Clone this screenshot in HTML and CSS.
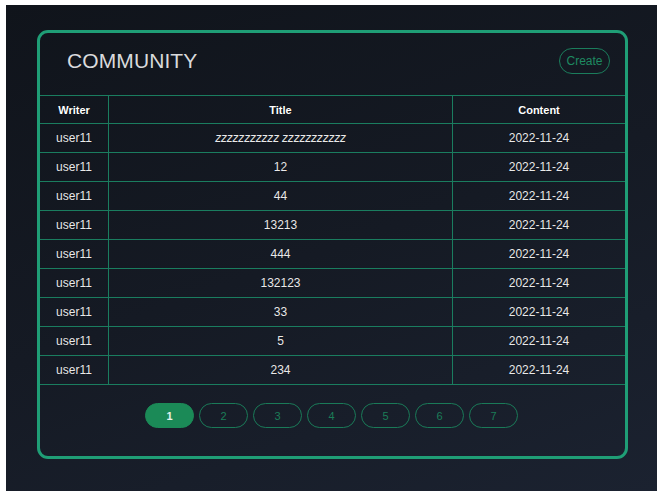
FILE: index.html
```html
<!DOCTYPE html>
<html>
<head>
<meta charset="utf-8">
<link rel="stylesheet" href="styles.css">
</head>
<body>
<div class="screen">
  <div class="card">
    <div class="card-head">
      <h1 class="title">COMMUNITY</h1>
      <button class="create">Create</button>
    </div>
    <table class="board">
      <thead>
        <tr><th class="c-writer">Writer</th><th class="c-title">Title</th><th class="c-content">Content</th></tr>
      </thead>
      <tbody>
        <tr><td>user11</td><td class="zz">zzzzzzzzzzz zzzzzzzzzzz</td><td>2022-11-24</td></tr>
        <tr><td>user11</td><td>12</td><td>2022-11-24</td></tr>
        <tr><td>user11</td><td>44</td><td>2022-11-24</td></tr>
        <tr><td>user11</td><td>13213</td><td>2022-11-24</td></tr>
        <tr><td>user11</td><td>444</td><td>2022-11-24</td></tr>
        <tr><td>user11</td><td>132123</td><td>2022-11-24</td></tr>
        <tr><td>user11</td><td>33</td><td>2022-11-24</td></tr>
        <tr><td>user11</td><td>5</td><td>2022-11-24</td></tr>
        <tr><td>user11</td><td>234</td><td>2022-11-24</td></tr>
      </tbody>
    </table>
    <div class="pager">
      <button class="pg active">1</button>
      <button class="pg">2</button>
      <button class="pg">3</button>
      <button class="pg">4</button>
      <button class="pg">5</button>
      <button class="pg">6</button>
      <button class="pg">7</button>
    </div>
  </div>
</div>
</body>
</html>
```
FILE: styles.css
```css
html, body {
  margin: 0;
  padding: 0;
  background: #ffffff;
}
body {
  font-family: "Liberation Sans", Arial, sans-serif;
}
.screen {
  margin: 5px 7px 0 6px;
  height: 486px;
  background: linear-gradient(160deg, #10141b 0%, #151a24 50%, #1b2230 100%);
  padding: 25px 0 0 31px;
  box-sizing: border-box;
}
.card {
  width: 591px;
  height: 429px;
  box-sizing: border-box;
  border: 3px solid #1f9e76;
  border-radius: 11px;
  display: flex;
  flex-direction: column;
}
.card-head {
  height: 62px;
  box-sizing: border-box;
  display: flex;
  align-items: center;
  justify-content: space-between;
  padding: 0 15px 6px 27px;
}
.title {
  margin: 0;
  font-size: 21px;
  font-weight: normal;
  color: #d9dadc;
  letter-spacing: 0.1px;
}
.create {
  width: 51px;
  height: 26px;
  border: 1px solid #1b7d5c;
  border-radius: 13px;
  background: transparent;
  color: #1e8a61;
  font-family: "Liberation Sans", Arial, sans-serif;
  font-size: 12px;
  padding: 0;
}
.board {
  width: 100%;
  border-collapse: collapse;
  color: #e9e9ea;
  font-size: 12px;
  text-shadow: 0 0 1px rgba(0,0,0,0.6);
}
.board th, .board td {
  border: 1px solid #1a7d5f;
  text-align: center;
  padding: 0;
}
.board tr > :first-child { border-left: none; }
.board tr > :last-child { border-right: none; }
.board th {
  height: 27px;
  font-size: 11px;
  font-weight: bold;
  color: #ffffff;
}
.board td {
  height: 28px;
}
.c-writer { width: 68px; }
.c-content { width: 172px; }
.zz {
  font-style: italic;
  font-size: 12px;
  letter-spacing: -0.2px;
}
.pager {
  display: flex;
  justify-content: center;
  gap: 5px;
  padding-top: 18px;
  padding-right: 2px;
}
.pg {
  width: 49px;
  height: 25px;
  border: 1px solid #1a7a58;
  border-radius: 13px;
  background: transparent;
  color: #1b7d58;
  font-family: "Liberation Sans", Arial, sans-serif;
  font-size: 11px;
  padding: 0;
}
.pg.active {
  background: #1b8a57;
  border-color: #1b8a57;
  color: #e6f2ec;
  font-weight: bold;
}
```
